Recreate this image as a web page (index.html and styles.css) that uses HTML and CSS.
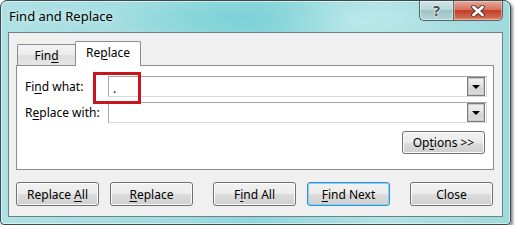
FILE: index.html
```html
<!DOCTYPE html>
<html lang="en">
<head>
    <meta charset="UTF-8">
    <title>Find and Replace</title>
    <link rel="stylesheet" href="styles.css">
</head>
<body>
    <div class="window">
        <div class="titlebar">
            <span class="title">Find and Replace</span>
            <div class="caption-buttons">
                <div class="cap-btn help">?</div>
                <div class="cap-btn close">
                    <svg width="16" height="12" viewBox="0 0 16 12">
                        <path d="M3.5 2 L12.5 10 M12.5 2 L3.5 10" stroke="#4a3030" stroke-width="4.6" stroke-linecap="round"/>
                        <path d="M3.5 2 L12.5 10 M12.5 2 L3.5 10" stroke="#ffffff" stroke-width="2.8" stroke-linecap="round"/>
                    </svg>
                </div>
            </div>
        </div>
        <div class="client">
            <div class="tabs">
                <div class="tab">Fin<u>d</u></div>
                <div class="tab active">Re<u>p</u>lace</div>
            </div>
            <div class="panel">
                <div class="field-row find-row">
                    <label class="field-label">Fi<u>n</u>d what:</label>
                    <div class="combo">
                        <span class="combo-text">.</span>
                        <div class="drop-btn"><span class="arrow"></span></div>
                    </div>
                    <div class="highlight"></div>
                </div>
                <div class="field-row">
                    <label class="field-label">R<u>e</u>place with:</label>
                    <div class="combo">
                        <span class="combo-text"></span>
                        <div class="drop-btn"><span class="arrow"></span></div>
                    </div>
                </div>
                <div class="options-row">
                    <button class="btn options">Op<u>t</u>ions &gt;&gt;</button>
                </div>
            </div>
            <div class="button-row">
                <button class="btn">Replace <u>A</u>ll</button>
                <button class="btn gap-s"><u>R</u>eplace</button>
                <button class="btn gap-l">F<u>i</u>nd All</button>
                <button class="btn gap-s default"><u>F</u>ind Next</button>
                <button class="btn gap-l">Close</button>
            </div>
        </div>
    </div>
</body>
</html>
```

FILE: styles.css
```css
body {
    margin: 0;
    background: #ffffff;
    font-family: "Noto Sans", "Open Sans", sans-serif;
    font-size: 12px;
    color: #000;
}

u {
    text-decoration-thickness: 1px;
    text-underline-offset: 2px;
}

.window {
    width: 511px;
    height: 225px;
    box-sizing: border-box;
    border: 1px solid #3d4b50;
    border-radius: 7px 7px 4px 4px;
    padding: 0 7px 7px 7px;
    display: flex;
    flex-direction: column;
    background:
        radial-gradient(ellipse 120px 30px at 230px 18px, rgba(120, 210, 215, 0.8), transparent),
        radial-gradient(ellipse 90px 25px at 360px 20px, rgba(190, 235, 236, 0.8), transparent),
        linear-gradient(to right, #aee1e4, #a2dde0 30%, #8fd6da 50%, #b1e2e4 75%, #9fdadd);
    box-shadow: 2px 2px 3px rgba(0, 0, 0, 0.45), inset 0 0 0 1px rgba(255, 255, 255, 0.5);
}

.titlebar {
    height: 31px;
    display: flex;
    align-items: flex-start;
}

.title {
    margin: 7px 0 0 1px;
    font-size: 13px;
    line-height: 16px;
    color: #000;
    text-shadow: 0 0 6px rgba(255, 255, 255, 0.9);
}

.caption-buttons {
    margin-left: auto;
    display: flex;
}

.cap-btn {
    height: 20px;
    box-sizing: border-box;
    border: 1px solid #536468;
    border-top: none;
    display: flex;
    align-items: center;
    justify-content: center;
}

.help {
    width: 34px;
    border-right: none;
    border-radius: 0 0 0 5px;
    background: linear-gradient(#cfe6e7, #b7d4d6 50%, #9fc2c4 50%, #b4d6d8);
    font-weight: bold;
    font-size: 14px;
    color: #3e4e52;
    text-shadow: 0 0 2px #fff, 0 0 2px #fff;
    box-shadow: inset 0 0 0 1px rgba(255, 255, 255, 0.45);
}

.close {
    width: 50px;
    border-radius: 0 0 5px 0;
    background: linear-gradient(#e6a99c, #d6735f 45%, #c23f2c 50%, #d0644c 85%, #e3937a);
    box-shadow: inset 0 0 0 1px rgba(255, 220, 210, 0.5);
}

.client {
    flex: 1;
    border: 1px solid #6f8287;
    background: #f0f0f0;
    padding: 8px 0 0 7px;
}

.tabs {
    display: flex;
    align-items: flex-end;
    height: 24px;
    margin-left: 1px;
}

.tab {
    height: 20px;
    width: 57px;
    box-sizing: content-box;
    border: 1px solid #898c95;
    border-bottom: none;
    border-radius: 2px 2px 0 0;
    background: linear-gradient(#f3f3f3, #ebebeb 50%, #dedede 50%, #e5e5e5);
    text-align: center;
    line-height: 21px;
}

.tab.active {
    width: 64px;
    height: 24px;
    margin-bottom: -1px;
    margin-left: -1px;
    background: #ffffff;
    line-height: 22px;
    position: relative;
    z-index: 1;
}

.panel {
    width: 478px;
    height: 105px;
    box-sizing: border-box;
    border: 1px solid #898c95;
    background: #ffffff;
    padding: 10px 0 0 8px;
}

.field-row {
    display: flex;
    align-items: center;
    height: 21px;
    margin-bottom: 5px;
}

.find-row {
    position: relative;
}

.field-label {
    width: 83px;
    line-height: 16px;
}

.combo {
    width: 379px;
    height: 21px;
    box-sizing: border-box;
    border: 1px solid #a3a6ad;
    border-bottom-color: #d5d9e0;
    border-right-color: #d5d9e0;
    display: flex;
    align-items: center;
    padding: 1px 1px 1px 4px;
}

.combo-text {
    flex: 1;
    line-height: 16px;
    margin-top: 5px;
}

.drop-btn {
    width: 18px;
    height: 19px;
    box-sizing: border-box;
    border: 1px solid #7b7b7b;
    background: linear-gradient(#f2f2f2, #e3e3e3 50%, #d3d3d3 50%, #dadada);
    box-shadow: inset 0 0 0 1px #c9c9c9;
    display: flex;
    align-items: center;
    justify-content: center;
}

.arrow {
    width: 0;
    height: 0;
    border-left: 4px solid transparent;
    border-right: 4px solid transparent;
    border-top: 4px solid #000;
}

.highlight {
    position: absolute;
    left: 68px;
    top: -4px;
    width: 48px;
    height: 32px;
    box-sizing: border-box;
    border: 3px solid #c9151d;
}

.options-row {
    display: flex;
    justify-content: flex-end;
    padding-right: 8px;
    margin-top: 8px;
}

.btn {
    width: 83px;
    height: 23px;
    box-sizing: border-box;
    border: 1px solid #707070;
    border-radius: 3px;
    background: linear-gradient(#f2f2f2, #ebebeb 50%, #dddddd 50%, #cfcfcf);
    box-shadow: inset 0 0 0 1px #fbfbfb;
    font-family: "Noto Sans", "Open Sans", sans-serif;
    font-size: 12px;
    color: #000;
    padding: 0;
    line-height: 19px;
}

.button-row {
    display: flex;
    margin-top: 12px;
}

.button-row .btn {
    height: 24px;
}

.gap-s {
    margin-left: 11px;
}

.gap-l {
    margin-left: 20px;
}

.btn.default {
    border-color: #3c8fd0;
    box-shadow: inset 0 0 0 1px #7fd3f7;
}
```
